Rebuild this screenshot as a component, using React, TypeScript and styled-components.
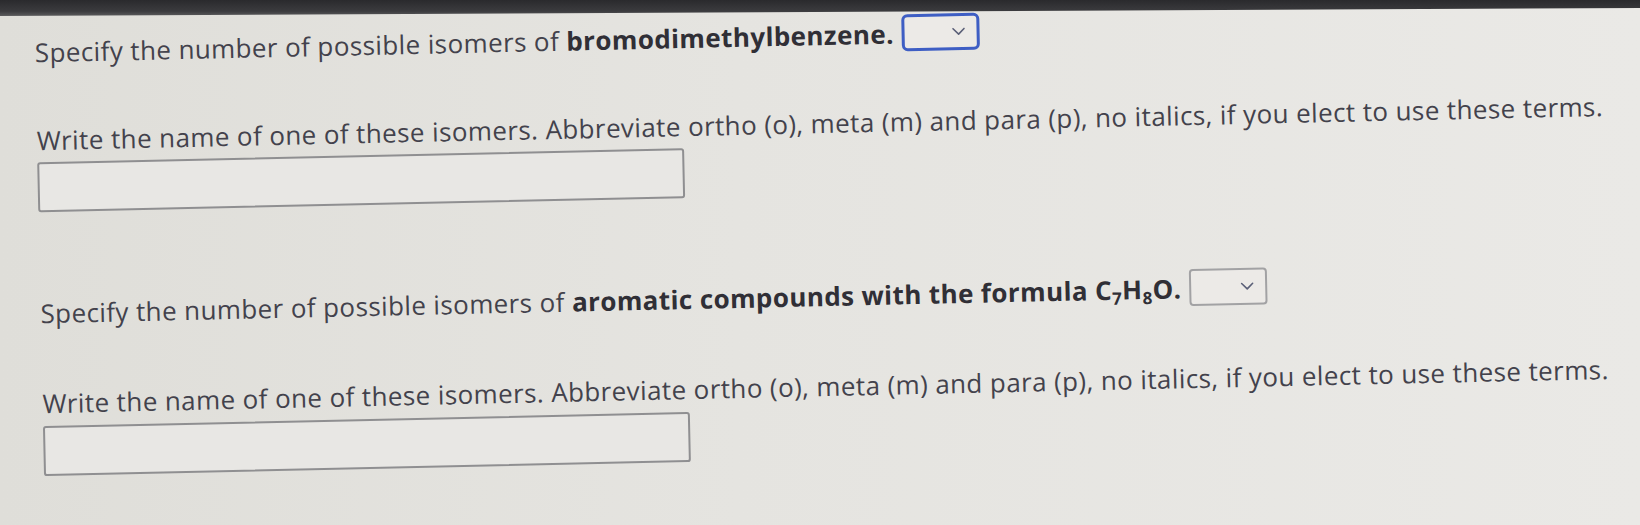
import React from "react";
import styled, { createGlobalStyle } from "styled-components";

const Global = createGlobalStyle`
  html, body { margin: 0; padding: 0; }
  body {
    width: 1640px;
    height: 525px;
    overflow: hidden;
    background: linear-gradient(90deg, #dfded9 0%, #e5e4e0 45%, #eae9e6 100%);
    font-family: "Open Sans", "Noto Sans", sans-serif;
  }
`;

const Page = styled.div`
  width: 1640px;
  height: 525px;
  display: flex;
  flex-direction: column;
`;

const Bezel = styled.div`
  height: 16px;
  flex: none;
  background: linear-gradient(180deg, #2a2a2d 0%, #3b3b3e 70%, #5a5a5c 100%);
  clip-path: polygon(0 0, 100% 0, 100% 50%, 0 100%);
`;

const Sheet = styled.div`
  padding: 18px 0 0 34px;
  display: flex;
  flex-direction: column;
  align-items: flex-start;
  transform: rotate(-1.25deg);
  transform-origin: 0 0;
`;

const Row = styled.div<{ $mt?: number }>`
  display: flex;
  align-items: center;
  gap: 8px;
  margin-top: ${(p) => p.$mt ?? 0}px;
`;

const Prompt = styled.p<{ $mt?: number }>`
  margin: ${(p) => p.$mt ?? 0}px 0 0 0;
  font-size: 26px;
  letter-spacing: 0.4px;
  line-height: 34px;
  color: #43424c;
  white-space: nowrap;
`;

const Strong = styled.b`
  font-weight: 700;
  color: #302f36;
`;

const Sub = styled.sub`
  font-size: 17px;
  line-height: 0;
  vertical-align: -5px;
`;

const Select = styled.div<{ $focused?: boolean }>`
  box-sizing: border-box;
  width: 78px;
  height: 37px;
  border: ${(p) => (p.$focused ? "3px solid #3e5ec4" : "2px solid #a2a2a4")};
  border-radius: ${(p) => (p.$focused ? 6 : 4)}px;
  background: #eceae7;
  display: flex;
  align-items: center;
  justify-content: flex-end;
  padding-right: 11px;
  color: #5b6078;
`;

const TextInput = styled.div<{ $mt?: number }>`
  box-sizing: border-box;
  width: 647px;
  height: 50px;
  margin-top: ${(p) => p.$mt ?? 0}px;
  border: 2px solid #8f8f91;
  border-radius: 3px;
  background: #e8e7e4;
`;

const Chevron = () => (
  <svg width="14" height="9" viewBox="0 0 14 9" fill="none">
    <path d="M1.5 1.5 L7 7 L12.5 1.5" stroke="currentColor" strokeWidth="1.6" strokeLinecap="round" strokeLinejoin="round" />
  </svg>
);

const abbrev =
  "Write the name of one of these isomers. Abbreviate ortho (o), meta (m) and para (p), no italics, if you elect to use these terms.";

export default function App() {
  return (
    <>
      <Global />
      <Page>
        <Bezel />
        <Sheet>
          <Row>
            <Prompt>
              Specify the number of possible isomers of <Strong>bromodimethylbenzene.</Strong>
            </Prompt>
            <Select $focused>
              <Chevron />
            </Select>
          </Row>
          <Prompt $mt={53}>{abbrev}</Prompt>
          <TextInput $mt={5} />
          <Row $mt={82}>
            <Prompt>
              Specify the number of possible isomers of{" "}
              <Strong>
                aromatic compounds with the formula C<Sub>7</Sub>H<Sub>8</Sub>O.
              </Strong>
            </Prompt>
            <Select>
              <Chevron />
            </Select>
          </Row>
          <Prompt $mt={55}>{abbrev}</Prompt>
          <TextInput $mt={6} />
        </Sheet>
      </Page>
    </>
  );
}
